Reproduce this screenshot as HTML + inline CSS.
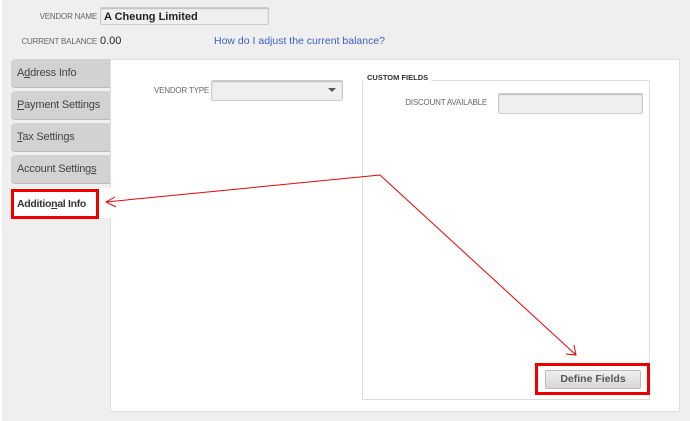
<!DOCTYPE html>
<html><head><style>
body{margin:0;width:690px;height:421px;background:#fff;position:relative;overflow:hidden;font-family:"Liberation Sans",Arial,sans-serif;}
.bg{position:absolute;left:2px;top:0;width:688px;height:421px;background:#efefef;}
.a{position:absolute;}
.lbl{font-size:8px;color:#666;letter-spacing:-0.2px;text-align:right;}
.tab{position:absolute;left:11px;width:99px;height:28px;background:#d2d2d2;border-radius:4px 0 0 4px;font-size:11px;color:#444;line-height:28px;padding-left:6px;box-sizing:border-box;box-shadow:0 1px 0 #bbb;letter-spacing:-0.2px;}
.inp{position:absolute;border:1px solid #ccc;background:#efefef;border-radius:2px;box-shadow:inset 0 1px 1px #bbb;}
</style></head><body>
<div class="bg"></div>
<div class="a lbl" style="right:593px;top:12px">VENDOR NAME</div>
<div class="inp" style="left:100px;top:7px;width:169px;height:18px;font-weight:bold;font-size:11px;color:#222;line-height:18px;padding-left:3px;box-sizing:border-box">A Cheung Limited</div>
<div class="a lbl" style="right:593px;top:37px">CURRENT BALANCE</div>
<div class="a" style="left:100px;top:35px;font-size:11px;color:#222">0.00</div>
<div class="a" style="left:214px;top:35px;font-size:10.5px;color:#3d5fc4">How do I adjust the current balance?</div>
<div class="a" style="left:110px;top:59px;width:570px;height:353px;background:#fff;border:1px solid #ddd;box-sizing:border-box"></div>
<div class="tab" style="top:59px">A<u>d</u>dress Info</div>
<div class="tab" style="top:91px"><u>P</u>ayment Settings</div>
<div class="tab" style="top:123px"><u>T</u>ax Settings</div>
<div class="tab" style="top:155px">Account Setting<u>s</u></div>
<div class="a" style="left:11px;top:188px;width:100px;height:30px;background:#fff"></div>
<div class="a" style="left:11px;top:189px;width:88px;height:30px;border:3px solid #e00;box-sizing:border-box;font-weight:bold;font-size:10.5px;color:#333;line-height:24px;padding-left:3px;letter-spacing:-0.3px">Additio<u>n</u>al Info</div>
<div class="a lbl" style="right:481px;top:86px">VENDOR TYPE</div>
<div class="inp" style="left:211px;top:80px;width:130px;height:19px"><div class="a" style="right:6px;top:7px;border-left:4px solid transparent;border-right:4px solid transparent;border-top:4px solid #555"></div></div>
<div class="a" style="left:362px;top:80px;width:288px;height:320px;border:1px solid #ddd;box-sizing:border-box"></div>
<div class="a" style="left:364px;top:73px;background:#fff;padding:0 3px;font-size:7.5px;font-weight:bold;color:#333">CUSTOM FIELDS</div>
<div class="a lbl" style="right:203px;top:98px">DISCOUNT AVAILABLE</div>
<div class="inp" style="left:498px;top:93px;width:143px;height:19px"></div>
<div class="a" style="left:545px;top:370px;width:96px;height:19px;border:1px solid #bbb;border-radius:2px;background:linear-gradient(#f0f0f0,#d6d6d6);box-sizing:border-box;font-size:10.5px;font-weight:bold;color:#555;text-align:center;line-height:17px">Define Fields</div>
<div class="a" style="left:535px;top:363px;width:115px;height:32px;border:3px solid #e00;box-sizing:border-box"></div>
<svg class="a" style="left:0;top:0" width="690" height="421"><g stroke="#e00" stroke-width="1" fill="none">
<polyline points="106,202 380,175 576,355"/>
<polyline points="115,197 106,202 116,207"/>
<polyline points="566,354 576,355 574,345"/></g></svg>
</body></html>
